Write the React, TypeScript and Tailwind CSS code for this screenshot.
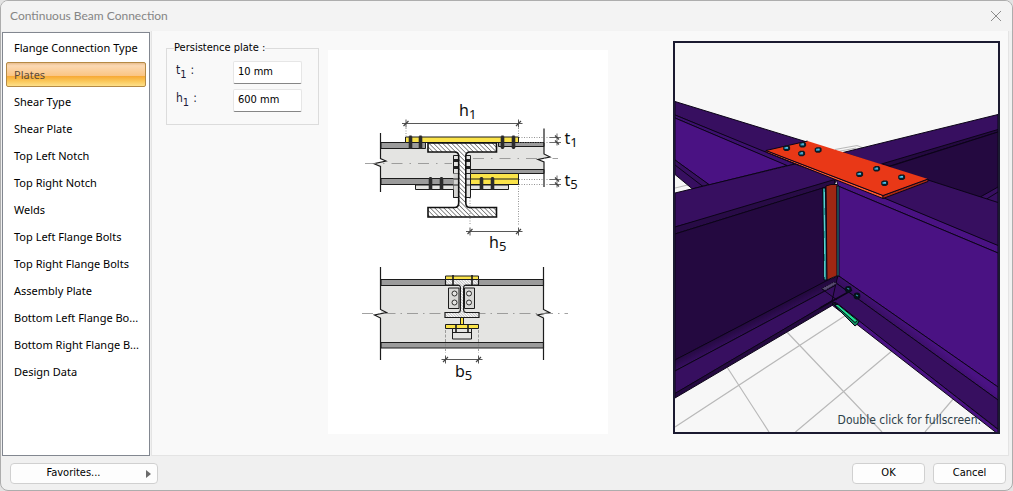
import { useState } from "react";
import type { ReactNode } from "react";

const PAGES = [
  "Flange Connection Type",
  "Plates",
  "Shear Type",
  "Shear Plate",
  "Top Left Notch",
  "Top Right Notch",
  "Welds",
  "Top Left Flange Bolts",
  "Top Right Flange Bolts",
  "Assembly Plate",
  "Bottom Left Flange Bo...",
  "Bottom Right Flange B...",
  "Design Data",
];

const STEEL = "#9b9b9b";
const WEB = "#e4e4e2";
const YELLOW = "#fbe44a";
const INK = "#1c1c1c";

function Bolt({ x, y, h }: { x: number; y: number; h: number }) {
  return (
    <g fill="#2b2b2b">
      <rect x={x - 1.2} y={y} width={2.4} height={h} />
      <rect x={x - 1.8} y={y + 1} width={3.6} height={h - 2} />
    </g>
  );
}

function DimensionH({ x1, x2, y }: { x1: number; x2: number; y: number }) {
  return (
    <g stroke="#444" strokeWidth="0.9" fill="none">
      <path d={`M${x1 - 4} ${y}H${x2 + 4}`} />
      <path d={`M${x1} ${y - 4}v8M${x2} ${y - 4}v8`} />
      <path d={`M${x1 - 2.5} ${y + 2.5}l5 -5M${x2 - 2.5} ${y + 2.5}l5 -5`} strokeWidth="1.2" />
    </g>
  );
}

function DimensionV({ x, y1, y2 }: { x: number; y1: number; y2: number }) {
  return (
    <g stroke="#444" fill="none">
      <path d={`M519 ${y1}H550M519 ${y2}H550`} stroke="#777" strokeWidth="0.8" strokeDasharray="1 1.5" />
      <path d={`M550 ${y1}h11M550 ${y2}h11M${x} ${y1 - 4}V${y2 + 3}`} strokeWidth="0.8" />
      <path d={`M${x - 2} ${y1 - 2}l4 4M${x - 2} ${y2 - 2}l4 4`} strokeWidth="1.2" />
    </g>
  );
}

function Label({ x, y, name, index }: { x: number; y: number; name: string; index: string }) {
  return (
    <text x={x} y={y} fontSize="16" fill="#111">
      {name}
      <tspan fontSize="13" dy="3">
        {index}
      </tspan>
    </text>
  );
}

function PlateDrawing() {
  return (
    <svg
      viewBox="328 50 280 384"
      className="block h-auto w-full bg-white font-['Noto_Sans','Open_Sans',sans-serif]"
      role="img"
      aria-label="Persistence plate dimensions"
    >
      <defs>
        <pattern id="hatch" width="3.2" height="3.2" patternUnits="userSpaceOnUse" patternTransform="rotate(-45)">
          <rect width="3.2" height="3.2" fill="#fff" />
          <path d="M0 0V3.2" stroke="#555" strokeWidth="1.3" />
        </pattern>
        <pattern id="fine" width="2" height="2" patternUnits="userSpaceOnUse" patternTransform="rotate(-45)">
          <rect width="2" height="2" fill="#fff" />
          <path d="M0 0V2" stroke="#777" strokeWidth="0.9" />
        </pattern>
      </defs>

      {/* elevation: left and right beams */}
      <path d="M381 148H460V179H381V167L374 164L387 161L381 158Z" fill={WEB} />
      <path d="M465 146H544V154L550 157L538 159.500L544 162V170H465Z" fill={WEB} />
      <g stroke={INK} strokeWidth="1">
        <path d="M381 142.500H425.500V148.500H381Z" fill={STEEL} />
        <path d="M381 178.500H454V184.500H381Z" fill={STEEL} />
        <path d="M498.500 142.500H544V146.500H498.500Z" fill={STEEL} />
        <path d="M470 169.500H544V173.500H470Z" fill={STEEL} />
      </g>
      <g stroke={INK} strokeWidth="1.2" fill="none">
        <path d="M380.500 133V158.500L386 161L374 163.700L380.500 166.500V192" />
        <path d="M544 128.500V154L550 157L538 159.500L544 162V187" />
      </g>
      <path
        d="M365 163.500H452M473 158.500H558"
        stroke="#8a8a8a"
        strokeWidth="0.8"
        strokeDasharray="11 7 1.500 7"
      />
      <g stroke={INK} strokeWidth="1">
        <path d="M405.500 137H518.500V142.500H405.500Z" fill={YELLOW} />
        <path d="M470.500 173.500H518.500V184.500H470.500Z" fill={YELLOW} />
        <path d="M470.500 179H518.500" />
        <path d="M415.500 185H453.500V197.500H459V185" fill={WEB} />
        <path d="M415.500 185H453.500V189.500H415.500Z" fill={WEB} />
        <path d="M508.500 185H470.500V189.500H508.500Z" fill={WEB} />
        <path d="M453.500 155.500H459V173.500H453.500Z" fill={WEB} />
        <path d="M465.500 155.500H470.500V173.500H465.500Z" fill={WEB} />
        <path d="M453.500 173.500H459V197.500H453.500Z" fill="#d3d3d1" stroke="none" />
        <path d="M465.500 173.500H470.500V197.500H465.500Z" fill="#e4e4e2" />
        <path d="M453.500 179H459M453.500 185H459M453.500 189.500V197.500H459M465.500 179H470.500M465.500 185H470.500" fill="none" />
      </g>
      <g fill="#222">
        <rect x="453" y="159" width="5" height="3" />
        <rect x="453" y="166" width="5" height="3" />
        <rect x="466" y="159" width="5" height="3" />
        <rect x="466" y="166" width="5" height="3" />
      </g>
      <path
        d="M428 143H496.500V152H470Q465.800 152 465.800 156V203Q465.800 207.500 470 207.500H496.500V217H428V207.500H454.500Q458.700 207.500 458.700 203V156Q458.700 152 454.500 152H428Z"
        fill="url(#hatch)"
        stroke="#111"
        strokeWidth="1.6"
      />
      {[410.5, 420.5, 502.5, 513.5].map((x) => (
        <Bolt key={x} x={x} y={135.5} h={13.5} />
      ))}
      {[430.5, 441.5, 481.5, 492.5].map((x) => (
        <Bolt key={x} x={x} y={177} h={13} />
      ))}
      <DimensionH x1={406} x2={518.5} y={123.5} />
      <DimensionH x1={470} x2={518.5} y={231.5} />
      <path
        d="M406 128V136M518.500 128V136M470 198V225M518.500 186V225"
        stroke="#777"
        strokeWidth="0.8"
        strokeDasharray="1 1.500"
      />
      <DimensionV x={557} y1={137.5} y2={142.5} />
      <DimensionV x={557} y1={179.5} y2={184.5} />
      <Label x={459} y={116} name="h" index="1" />
      <Label x={564.5} y={144} name="t" index="1" />
      <Label x={564.5} y={186} name="t" index="5" />
      <Label x={489} y={248} name="h" index="5" />

      {/* cross section */}
      <path d="M381 285H543.500V343H381Z" fill={WEB} />
      <g stroke={INK} strokeWidth="1.1" fill={STEEL}>
        <path d="M381 279.500H543.500V285.500H381Z" />
        <path d="M381 342.500H543.500V348H381Z" />
      </g>
      <path d="M381 309L387 312.500L374 315L381 318ZM543.500 309L549 312.500L537 315L543.500 318Z" fill={WEB} />
      <g stroke={INK} strokeWidth="1.2" fill="none">
        <path d="M380.500 267V309.500L386.500 312.500L374.500 315L380.500 318V360" />
        <path d="M543.500 267V309.500L549.500 312.500L537.500 315L543.500 318V360" />
      </g>
      <path d="M362 313.500H568" stroke="#8a8a8a" strokeWidth="0.8" strokeDasharray="11 5 1.500 5" />
      <g stroke={INK} strokeWidth="1">
        <path
          d="M445.500 279.500H478.500V285H466Q463.600 285 463.600 288V309.500Q463.600 312.500 466 312.500H479V317.500H445V312.500H458Q460.400 312.500 460.400 309.500V288Q460.400 285 458 285H445.500Z"
          fill="url(#fine)"
          strokeWidth="1.200"
        />
        <path d="M445.500 276H478.500V279.500H445.500Z" fill={YELLOW} />
        <path d="M448.500 288H459V308.500H448.500ZM464.500 288H474.500V308.500H464.500Z" fill="#d8d8d6" />
        <path d="M460.500 317.500H463.500V324.500H460.500Z" fill={YELLOW} />
        <path d="M445.500 324.500H478.500V328.500H445.500Z" fill={YELLOW} />
        <path d="M452.500 328.500H471.500V339H452.500ZM452.500 332.500H471.500" fill={WEB} />
        <path d="M453 275V285M472 275V285M456 324V333M468 324V333" strokeWidth="1.600" />
      </g>
      <g stroke={INK} strokeWidth="0.9" fill={WEB}>
        <circle cx="454.500" cy="293.500" r="2.500" />
        <circle cx="454.500" cy="302.500" r="2.500" />
        <circle cx="469" cy="293.500" r="2.500" />
        <circle cx="469" cy="302.500" r="2.500" />
      </g>
      <path d="M445.500 330V353M478.500 330V353" stroke="#888" strokeWidth="0.8" strokeDasharray="3 1.500" />
      <DimensionH x1={445.5} x2={478.5} y={359.5} />
      <Label x={455} y={377} name="b" index="5" />
    </svg>
  );
}

const TOP_BOLTS = [
  [786.5, 148.2],
  [802.5, 144.8],
  [801.5, 153.6],
  [818, 150],
  [859.5, 174.2],
  [876.5, 168.9],
  [884.5, 183.2],
  [901.5, 177.2],
];

function ModelScene() {
  return (
    <svg
      viewBox="675 43 323 389"
      preserveAspectRatio="xMidYMid slice"
      className="block h-full w-full"
      role="img"
      aria-label="Connection preview"
    >
      <defs>
        <linearGradient id="filletR" gradientUnits="userSpaceOnUse" x1="934" y1="342" x2="925" y2="353">
          <stop offset="0" stopColor="#4a1283" />
          <stop offset="1" stopColor="#370f60" />
        </linearGradient>
        <linearGradient id="filletL" gradientUnits="userSpaceOnUse" x1="750" y1="321" x2="755" y2="331">
          <stop offset="0" stopColor="#240940" />
          <stop offset="1" stopColor="#370f60" />
        </linearGradient>
      </defs>
      <rect x="675" y="43" width="323" height="389" fill="#f7f7f7" />
      <g stroke="#b9b9b9" strokeWidth="1.2" fill="none">
        <path d="M675 427L850 312.500M727 367L769 432M786 331L882 432M795.500 432L893 350M925 432L954 398M675 188L692 184" />
        <path d="M835 149.500L857 145.500L862 147.500M838 151.500L856 148" />
      </g>

      <g stroke="#0c0418" strokeWidth="1" strokeLinejoin="round">
        {/* rear left beam */}
        <path d="M675 101.500L807 142L840 170L795 165L675 115Z" fill="#370f60" />
        <path d="M675 115L795 164L787 166L675 118Z" fill="#3d1070" />
        <path d="M675 118L787 165.500L709 185L675 160Z" fill="#4a1283" />
        <path d="M675 160L709 184.500L692.500 189L675 174.500Z" fill="#370f60" />
        <path d="M675 165L703 186.500" fill="none" />
        {/* rear right beam */}
        <path d="M843 152.500L998 114.500V204L928 181Z" fill="#370f60" />
        <path d="M881.500 164L998 129.500V132L890 166Z" fill="#240940" />
        <path d="M888 167L998 132V187L978.500 198L928 181Z" fill="#240940" />
        <path d="M985 200L998 192" fill="none" />
        {/* front left beam */}
        <path d="M675 193L795 164L837 179L834.500 184L675 227Z" fill="#370f60" />
        <path d="M675 227L834.700 179.500V184.500L675 234Z" fill="#280b46" />
        <path d="M675 234L834 184.500L827 281L675 360Z" fill="#240940" />
        <path d="M675 360L826 281L838 276L838 284L675 371Z" fill="url(#filletL)" />
        <path d="M675 371L838 284L850 291L837 298L675 393.500Z" fill="#370f60" />
        <path d="M675 393.500L837 298L832 305.500L675 398Z" fill="#240940" />
        {/* front right beam */}
        <path d="M883 198L928 180L998 202.500V246Z" fill="#370f60" />
        <path d="M836 178L998 245.500V253L838 186Z" fill="#4a1283" />
        <path d="M838 186L998 253V387L838 275.500Z" fill="#4a1283" />
        <path d="M838 275.500L998 387V400L836 283Z" fill="url(#filletR)" />
        <path d="M836 283L998 400V429L832 301Z" fill="#370f60" />
        <path d="M835 302L998 429.500V434L832 305Z" fill="#4a1283" />
        {/* vertical stiffener */}
        <path d="M822.500 188H825.500L827 280H824Z" fill="#2b9c9c" />
        <path d="M826 186L831 184.500H837L837.500 275.500L827 280Z" fill="#9f2713" />
        <path d="M837 186H839V276H837Z" fill="#2b8c88" />
        {/* lower plate and its bolts */}
        <path d="M821.500 288.500L834 282L837 283.500L825 290.500Z" fill="#574a70" strokeDasharray="1 1" />
        <path d="M822 289L837 300" fill="none" />
        <path d="M820 308L852 290" fill="none" strokeWidth="1.600" />
        <path d="M832 303L838 304L859 320.500L858 323.500L855 326Z" fill="#128a5c" />
        <path d="M834.500 304.500L838 304.500L857.500 320.500L855 322.500Z" fill="#20e294" />
        {/* persistence plate */}
        <path d="M766 150.500L883 195.500V198.500L766 152Z" fill="#ff5a30" />
        <path d="M883 195.500L928 179V181.500L883 198.500Z" fill="#a92a12" />
        <path d="M766 150.500L807.500 141L928 179L883 195.500Z" fill="#e93817" stroke="none" />
        <path d="M807.500 141L766 150.500L883 195.500L928 179" fill="none" />
      </g>
      <path d="M824.500 192V278" stroke="#6fe6e6" strokeWidth="0.700" strokeDasharray="16 7" />
      {TOP_BOLTS.map(([x, y]) => (
        <g key={`${x}-${y}`} fill="#0b1a24">
          <path d={`M${x - 3.3} ${y - 1.4}l2 -1.400h3.600l1.300 1.400v2.600l-2 1.500h-3.300l-1.600 -1.500Z`} />
          <path d={`M${x - 2} ${y - 0.2}h3.600`} stroke="#2f9cc4" strokeWidth="2" />
          <path d={`M${x - 0.5} ${y - 0.8}h2`} stroke="#6cc8e4" strokeWidth="0.900" />
        </g>
      ))}
      {[
        [848.3, 289.3],
        [857, 296],
      ].map(([x, y]) => (
        <g key={x}>
          <circle cx={x} cy={y} r="3.400" fill="#06101a" />
          <path d={`M${x - 1} ${y - 1}l2 1`} stroke="#2f9aa8" strokeWidth="1.200" />
        </g>
      ))}
    </svg>
  );
}

function Field({ id, name, value }: { id: string; name: string; value: string }) {
  return (
    <div className="flex h-[23px] items-center justify-between">
      <label htmlFor={id} className="flex text-[12px] leading-4 text-[#1d1d3a]">
        {name}
        <span className="pt-[5px] pr-1 text-[11px] leading-4">1</span>:
      </label>
      <input
        id={id}
        defaultValue={value}
        className="h-[23px] w-[69px] rounded-[2px] border border-[#e6e6e6] border-b-[#868686] bg-white pb-[2px] pl-[4px] text-[11px] text-black outline-none"
      />
    </div>
  );
}

function PushButton({ className, children }: { className: string; children: ReactNode }) {
  return (
    <button
      type="button"
      className={`flex h-[21px] items-center justify-center rounded-[4px] border border-[#d0d0d0] bg-[#fdfdfd] text-[11px] text-black ${className}`}
    >
      {children}
    </button>
  );
}

export default function App() {
  const [current, setCurrent] = useState("Plates");

  return (
    <div className="flex min-h-screen bg-[#e3e3e3] font-['DejaVu_Sans_Condensed','Open_Sans',sans-serif]">
      <main className="flex flex-1 flex-col overflow-hidden rounded-[8px] border border-[#adadad] bg-[#f0f0f0]">
        <header className="flex h-[30px] items-center justify-between bg-[#f3f3f3] pr-[10px] pl-[9px]">
          <h1 className="font-['Lato','Open_Sans',sans-serif] text-[12px] leading-4 text-[#858585]">
            Continuous Beam Connection
          </h1>
          <button type="button" aria-label="Close" className="flex size-[12px] items-center justify-center">
            <svg viewBox="0 0 12 12" className="size-[12px]" fill="none" stroke="#8b8b8b" strokeWidth="1">
              <path d="M1 1L11 11M11 1L1 11" />
            </svg>
          </button>
        </header>

        <div className="flex flex-1">
          <nav
            aria-label="Pages"
            className="mt-px ml-px w-[148px] flex-none border border-[#828790] bg-white px-[3px] pt-[2px] font-['Noto_Sans','Open_Sans',sans-serif]"
          >
            <ul className="flex flex-col gap-[2px]">
              {PAGES.map((page) => (
                <li key={page}>
                  <button
                    type="button"
                    onClick={() => setCurrent(page)}
                    aria-current={page === current ? "page" : undefined}
                    className={
                      page === current
                        ? "block h-[25px] w-full rounded-[2px] border border-[#b58a45] bg-[linear-gradient(to_bottom,#e9bd8e_0%,#fbd9b3_12%,#fbc583_55%,#f7a834_57%,#fbc95c_80%,#fde08a_100%)] px-[7px] pt-px text-left text-[11px] whitespace-nowrap text-[#5d4c3a]"
                        : "block h-[25px] w-full rounded-[2px] border border-transparent px-[7px] pt-px text-left text-[11px] whitespace-nowrap text-black"
                    }
                  >
                    {page}
                  </button>
                </li>
              ))}
            </ul>
          </nav>

          <section className="mr-[3px] ml-px flex flex-1 items-start border border-t-0 border-[#e4e4e4] bg-[#f9f9f9] pr-[8px] pb-[21px] pl-[14px]">
            <fieldset className="mt-[9px] w-[153px] flex-none border border-[#dcdcdc] px-[7px] pb-[12px]">
              <legend className="text-[11px] leading-4 text-black">Persistence plate :</legend>
              <div className="flex flex-col gap-[5px] pt-[5px] pr-[9px] pl-[2px]">
                <Field id="t1" name="t" value="10 mm" />
                <Field id="h1" name="h" value="600 mm" />
              </div>
            </fieldset>
            <div className="mt-[19px] ml-[9px] w-[280px] flex-none">
              <PlateDrawing />
            </div>
            <div className="relative mt-[10px] ml-[65px] h-[393px] min-w-0 flex-1 overflow-hidden border-2 border-[#1b1a30]">
              <ModelScene />
              <p className="absolute right-[17px] bottom-[4px] text-[12px] leading-4 whitespace-nowrap text-[#2d4149]">
                Double click for fullscreen.
              </p>
            </div>
          </section>
        </div>

        <footer className="flex items-center gap-2 pt-[7px] pr-[6px] pb-[6px] pl-[9px]">
          <PushButton className="relative mr-auto w-[148px] pr-[21px]">
            Favorites...
            <svg viewBox="0 0 5 8" className="absolute right-[6px] h-[8px] w-[5px]" fill="#6b6b6b">
              <path d="M0 0L5 4L0 8Z" />
            </svg>
          </PushButton>
          <PushButton className="w-[73px]">OK</PushButton>
          <PushButton className="w-[73px]">Cancel</PushButton>
        </footer>
      </main>
    </div>
  );
}
